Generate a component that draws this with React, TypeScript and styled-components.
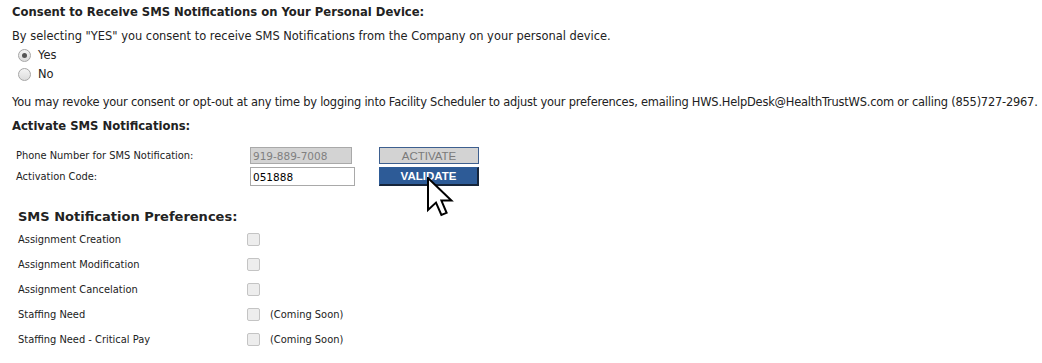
import React, { useState } from "react";
import styled, { createGlobalStyle } from "styled-components";

const GlobalStyle = createGlobalStyle`
  html, body {
    margin: 0;
    padding: 0;
    background: #ffffff;
  }
  body {
    font-family: "DejaVu Sans", Verdana, sans-serif;
    color: #222222;
  }
`;

const Page = styled.div`
  position: relative;
  padding: 5px 12px 0 12px;
  width: 1042px;
  height: 363px;
  box-sizing: border-box;
  overflow: hidden;
`;

const Heading = styled.div<{ spaced?: boolean }>`
  font-size: 11.6px;
  font-weight: bold;
  line-height: 15px;
  margin-top: ${({ spaced }) => (spaced ? 9 : 0)}px;
  margin-bottom: ${({ spaced }) => (spaced ? 0 : 9)}px;
`;

const Paragraph = styled.p<{ tight?: boolean }>`
  font-size: 11.45px;
  line-height: 15px;
  margin: 0;
  white-space: nowrap;
  letter-spacing: ${({ tight }) => (tight ? "-0.22px" : "0")};
`;

const RadioGroup = styled.div`
  display: flex;
  flex-direction: column;
  gap: 4px;
  margin: 4px 0 13px 6px;
`;

const RadioLabel = styled.label`
  display: flex;
  align-items: center;
  gap: 7px;
  font-size: 11.45px;
  line-height: 15px;
`;

const Radio = styled.span<{ checked?: boolean }>`
  width: 11px;
  height: 11px;
  border-radius: 50%;
  border: 1px solid #a6a6a6;
  background: linear-gradient(#f4f4f4, #dcdcdc);
  display: flex;
  align-items: center;
  justify-content: center;
  &::after {
    content: "";
    width: 5px;
    height: 5px;
    border-radius: 50%;
    background: ${({ checked }) => (checked ? "#555555" : "transparent")};
  }
`;

const FormTable = styled.div`
  display: grid;
  grid-template-columns: 234px 129px 100px;
  row-gap: 3px;
  align-items: center;
  margin: 13px 0 0 4px;
`;

const FieldLabel = styled.span`
  font-size: 9.9px;
  line-height: 14px;
`;

const TextInput = styled.input<{ disabledLook?: boolean; w: number }>`
  box-sizing: border-box;
  width: ${({ w }) => w}px;
  height: ${({ disabledLook }) => (disabledLook ? 17 : 19)}px;
  border: 1px solid #a9a9a9;
  background: ${({ disabledLook }) => (disabledLook ? "#d3d3d3" : "#ffffff")};
  color: ${({ disabledLook }) => (disabledLook ? "#808080" : "#000000")};
  font-family: "DejaVu Sans", Verdana, sans-serif;
  font-size: 10.5px;
  padding: 0 2px;
  outline: none;
`;

const Button = styled.button<{ primary?: boolean }>`
  box-sizing: border-box;
  width: 100px;
  height: ${({ primary }) => (primary ? 19 : 17)}px;
  font-family: "Liberation Sans", Arial, sans-serif;
  font-size: 11.5px;
  padding: 0;
  cursor: default;
  ${({ primary }) =>
    primary
      ? `
    background: #2d5b97;
    color: #ffffff;
    font-weight: bold;
    border: 1px solid #2d5b97;
    border-right: 2px solid #16253a;
    border-bottom: 2px solid #16253a;
  `
      : `
    background: #d3d3d3;
    color: #7a7a7a;
    border: 1px solid #3d5f8f;
  `}
`;

const PrefsHeading = styled.div`
  font-size: 13px;
  font-weight: bold;
  line-height: 18px;
  margin: 22px 0 1px 6px;
`;

const PrefsList = styled.div`
  display: flex;
  flex-direction: column;
  margin-left: 6px;
`;

const PrefRow = styled.div`
  display: grid;
  grid-template-columns: 229px 23px auto;
  align-items: center;
  height: 25px;
  font-size: 9.9px;
`;

const CheckBox = styled.span`
  box-sizing: border-box;
  width: 13px;
  height: 13px;
  border: 1px solid #c4c4c4;
  border-radius: 2px;
  background: #ededed;
`;

const Note = styled.span`
  font-size: 9.9px;
`;

const Cursor = styled.svg`
  position: absolute;
  left: 426px;
  top: 177px;
`;

const prefs = [
  { name: "Assignment Creation" },
  { name: "Assignment Modification" },
  { name: "Assignment Cancelation" },
  { name: "Staffing Need", note: "(Coming Soon)" },
  { name: "Staffing Need - Critical Pay", note: "(Coming Soon)" },
];

export default function App() {
  const [code, setCode] = useState("051888");
  return (
    <Page>
      <GlobalStyle />
      <Heading>Consent to Receive SMS Notifications on Your Personal Device:</Heading>
      <Paragraph>
        By selecting "YES" you consent to receive SMS Notifications from the Company on your
        personal device.
      </Paragraph>
      <RadioGroup>
        <RadioLabel>
          <Radio checked />
          Yes
        </RadioLabel>
        <RadioLabel>
          <Radio />
          No
        </RadioLabel>
      </RadioGroup>
      <Paragraph tight>
        You may revoke your consent or opt-out at any time by logging into Facility Scheduler to
        adjust your preferences, emailing HWS.HelpDesk@HealthTrustWS.com or calling
        (855)727-2967.
      </Paragraph>
      <Heading spaced>Activate SMS Notifications:</Heading>
      <FormTable>
        <FieldLabel>Phone Number for SMS Notification:</FieldLabel>
        <TextInput w={102} disabledLook value="919-889-7008" readOnly />
        <Button>ACTIVATE</Button>
        <FieldLabel>Activation Code:</FieldLabel>
        <TextInput w={105} value={code} onChange={(e) => setCode(e.target.value)} />
        <Button primary>VALIDATE</Button>
      </FormTable>
      <PrefsHeading>SMS Notification Preferences:</PrefsHeading>
      <PrefsList>
        {prefs.map((p) => (
          <PrefRow key={p.name}>
            <span>{p.name}</span>
            <CheckBox />
            {p.note ? <Note>{p.note}</Note> : <span />}
          </PrefRow>
        ))}
      </PrefsList>
      <Cursor width="28" height="40" viewBox="0 0 13 20">
        <path
          d="M0.5 0.5 L0.5 16.5 L4.5 12.8 L7.2 19 L9.8 17.9 L7.2 11.8 L12.2 11.8 Z"
          fill="#ffffff"
          stroke="#000000"
          strokeWidth="1"
          strokeLinejoin="miter"
        />
      </Cursor>
    </Page>
  );
}
